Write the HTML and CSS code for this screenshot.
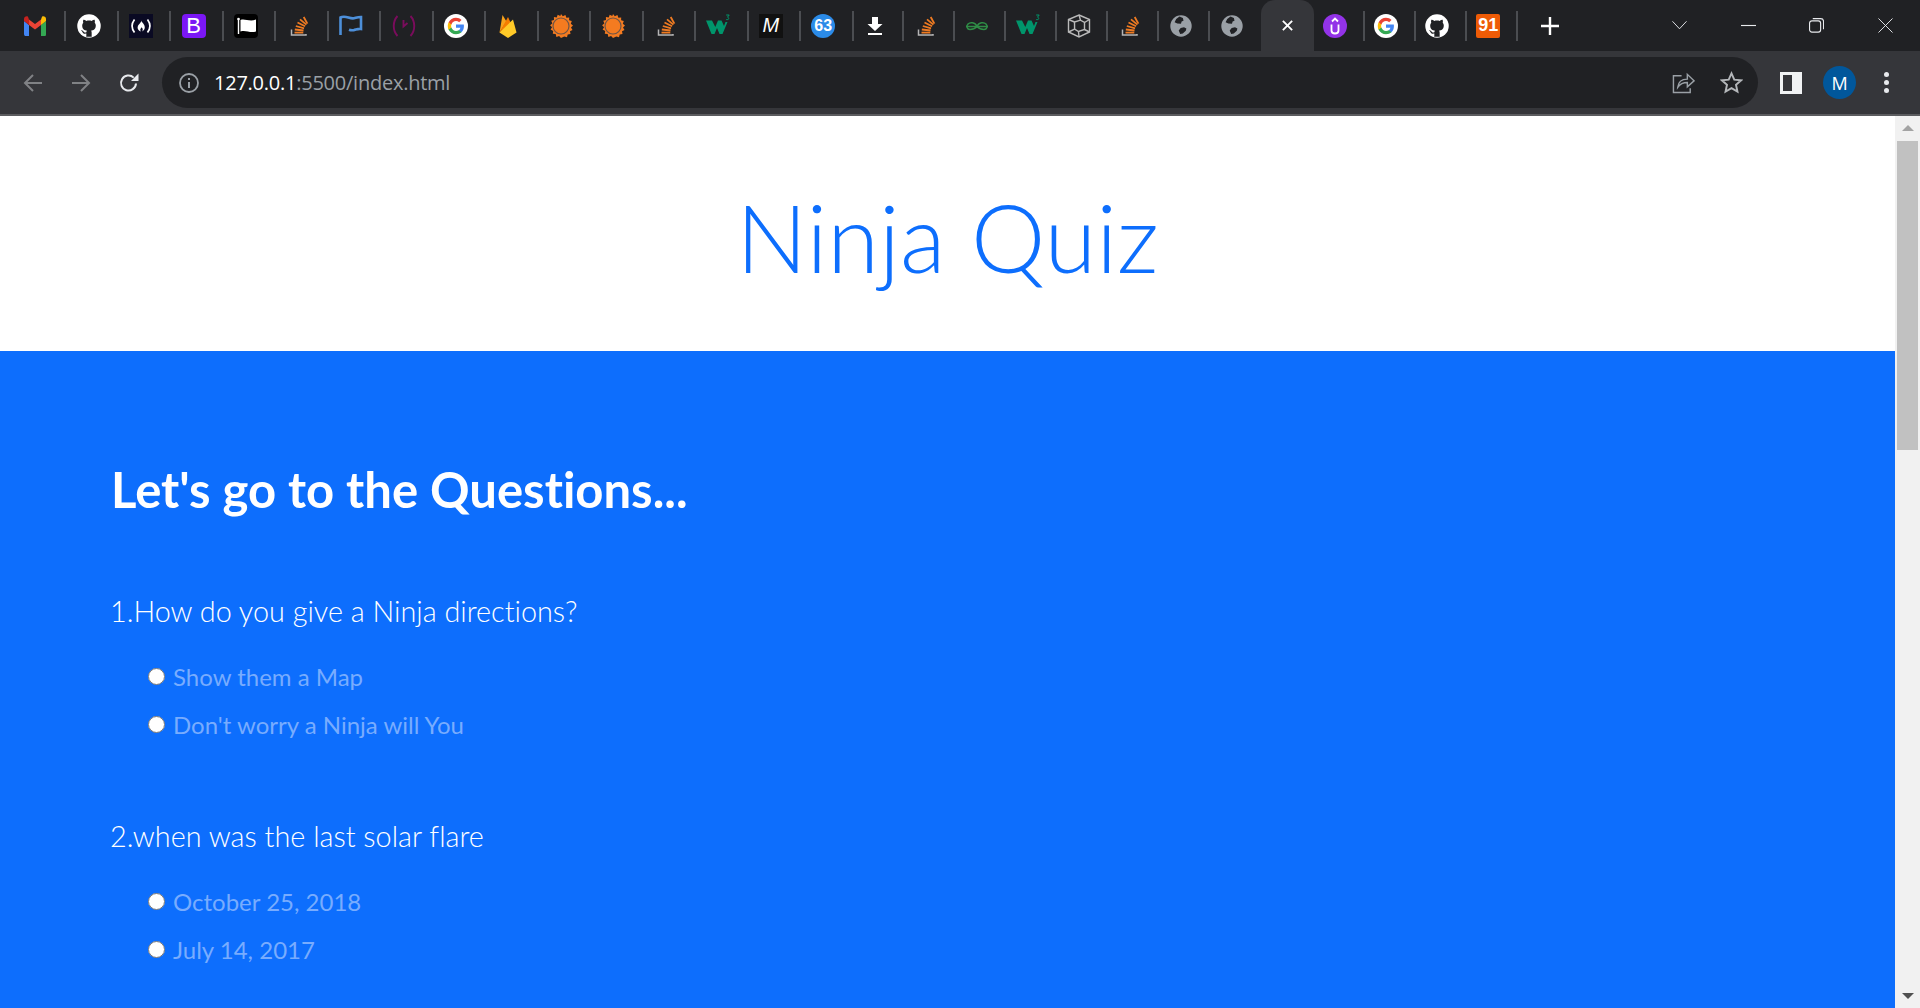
FILE: index.html
```html
<!DOCTYPE html>
<html lang="en">
<head>
    <meta charset="UTF-8">
    <title>Ninja Quiz</title>
    <link rel="stylesheet" href="styles.css">
</head>
<body>
    <svg class="defs" width="0" height="0">
        <symbol id="ic-github" viewBox="-1 -1 18 18">
            <circle cx="8" cy="8" r="8.8" fill="#fff"/>
            <path fill="#202124" d="M5.9 15.9c.1-.3.1-.5.1-.7 0-.2 0-.8 0-1.5-2 .4-2.5-.5-2.7-.9-.1-.2-.5-.9-.8-1.1-.3-.2-.7-.5 0-.5.6 0 1.1.6 1.2.8.7 1.2 1.9.9 2.3.7.1-.5.3-.9.5-1.1-1.8-.2-3.6-.9-3.6-3.9 0-.9.3-1.6.8-2.2-.1-.2-.4-1 .1-2.1 0 0 .7-.2 2.2.8.6-.2 1.3-.3 2-.3s1.4.1 2 .3c1.5-1 2.2-.8 2.2-.8.4 1.1.2 1.9.1 2.1.5.6.8 1.3.8 2.2 0 3-1.9 3.7-3.6 3.9.3.3.5.7.5 1.5v2.2c0 .2 0 .4.1.7H5.9z"/>
        </symbol>
        <symbol id="ic-google" viewBox="0 0 24 24">
            <circle cx="12" cy="12" r="12" fill="#fff"/>
            <g transform="translate(3 3) scale(.75)">
                <path fill="#4285f4" d="M22.56 12.25c0-.78-.07-1.53-.2-2.25H12v4.26h5.92c-.26 1.37-1.04 2.53-2.21 3.31v2.77h3.57c2.08-1.92 3.28-4.74 3.28-8.09z"/>
                <path fill="#34a853" d="M12 23c2.97 0 5.46-.98 7.28-2.66l-3.57-2.77c-.98.66-2.23 1.06-3.71 1.06-2.86 0-5.29-1.93-6.16-4.53H2.18v2.84C3.99 20.53 7.7 23 12 23z"/>
                <path fill="#fbbc05" d="M5.84 14.09c-.22-.66-.35-1.36-.35-2.09s.13-1.43.35-2.09V7.07H2.18C1.43 8.55 1 10.22 1 12s.43 3.45 1.18 4.93l3.66-2.84z"/>
                <path fill="#ea4335" d="M12 5.38c1.62 0 3.06.56 4.21 1.64l3.15-3.15C17.45 2.09 14.97 1 12 1 7.7 1 3.99 3.47 2.18 7.07l3.66 2.84c.87-2.6 3.3-4.53 6.16-4.53z"/>
            </g>
        </symbol>
        <symbol id="ic-so" viewBox="0 0 24 24">
            <path d="M4.500 15.500v5.500h14.500v-1" fill="none" stroke="#b5b5b5" stroke-width="1.500"/>
            <g stroke="#ef7b22" stroke-width="1.800" fill="none">
                <path d="M7.500 18.600h8.800"/>
                <path d="M7.800 15.500l8.700 1"/>
                <path d="M8.800 12l8.300 2.300"/>
                <path d="M10.500 8.500l7.600 3.800"/>
                <path d="M13 5.400l6.400 5.200"/>
                <path d="M16.700 3l3.700 6.600"/>
            </g>
        </symbol>
        <symbol id="ic-sun" viewBox="0 0 24 24">
            <path fill="#f47b20" d="M12 0l1.800 2.200 2.600-1.200 1 2.700 2.800-.3-.1 2.900 2.700.8-1 2.600 2.200 1.800-2 2 1.500 2.400-2.500 1.400.5 2.800-2.800.4-.7 2.800-2.700-.8L12 24l-1.900-2.100-2.700 1-.7-2.800-2.900-.3.4-2.800-2.600-1.400 1.500-2.400-2-2 2.200-1.800-1-2.600 2.700-.9-.1-2.800 2.800.3 1-2.700 2.600 1.200z"/>
            <circle cx="12" cy="12" r="8" fill="#f47b20" stroke="#6e5547" stroke-width="1.200"/>
        </symbol>
        <symbol id="ic-w3" viewBox="0 0 24 24">
            <path fill="#00956b" d="M0 6.500h6l3.300 6.500L12 6.500h3.500l2.500 5.500 1.500-4h2l-5 12h-3L11 14l-2.500 6h-3z"/>
            <path fill="none" stroke="#00956b" stroke-width="1" d="M20.200 1h3l-1.700 2.200c1.500 0 1.900 2.500-.3 2.500-.5 0-1-.2-1.200-.4"/>
        </symbol>
        <symbol id="ic-globe" viewBox="0 0 24 24">
            <circle cx="12" cy="12" r="10.700" fill="#9aa0a6"/>
            <path fill="#202124" d="M10.500 2.500L7.200 5 5.600 8.200l2.700 1.300 3.700.3.600-2.300 1.900-.8-.6-2.700zM15 13.300l-3.300.7-2 2.600 1.500 3.300 2.600-.5 3-2.700.6-2.200z"/>
        </symbol>
        <symbol id="ic-flag" viewBox="0 0 24 24">
            <path fill="none" stroke="#4d8fd9" stroke-width="2.600" d="M1.500 21V3.500c5-2.800 9 1.800 13.500.8 2.200-.5 4-1.400 7-1.300v12c-3-.5-5 .8-7.500 1.200-1.500.2-3 .1-4.500-.5"/>
        </symbol>
    </svg>

    <div class="tabstrip">
        <div class="tab first">
            <svg class="fav" viewBox="0 0 24 24">
                <path fill="#4285f4" d="M2 22h4V11l-5-4v13c0 1.100.900 2 1 2z"/>
                <path fill="#34a853" d="M18 22h4c1 0 1-.900 1-2V7l-5 4z"/>
                <path fill="#ea4335" d="M6 11V5.500l6 4.500 6-4.500V11l-6 4.500z"/>
                <path fill="#fbbc05" d="M18 5.500V11l5-4V5c0-2-2.400-3.400-4-2.200z"/>
                <path fill="#c5221f" d="M1 7l5 4V5.500L5 2.800C3.400 1.600 1 3 1 5z"/>
            </svg>
        </div>
        <div class="tab"><svg class="fav"><use href="#ic-github"/></svg></div>
        <div class="tab">
            <svg class="fav" viewBox="0 0 24 24">
                <rect width="24" height="24" fill="#0a0a23"/>
                <path d="M5.500 5.500C2.500 9.500 2.500 14.500 5.500 18.500M18.500 5.500c3 4 3 9 0 13" fill="none" stroke="#fff" stroke-width="1.700"/>
                <path fill="#fff" d="M12 6c.5 2.500 3.800 4 3.800 7.300 0 2.200-1.300 3.500-2.800 4.200 1.100-1.400 1-3-.5-4.300-.4 1.300-1.500 1.500-1.100 3 .1.500.2 1 .4 1.300-1.700-.5-3.200-2.100-3.200-4.100 0-2.500 2.300-3.600 3.400-5.700.3-.5.200-1.100 0-1.700z"/>
            </svg>
        </div>
        <div class="tab"><span class="fav letter boot">B</span></div>
        <div class="tab">
            <svg class="fav" viewBox="0 0 24 24">
                <rect width="24" height="24" rx="4" fill="#000"/>
                <circle cx="4.500" cy="5" r="1.300" fill="#fff"/>
                <path fill="#fff" d="M3.800 5h1.400v15H3.800zM6.500 6c4-1.800 9 2 15.500-.5v12c-6 2-10-1.800-15.500 0z"/>
            </svg>
        </div>
        <div class="tab"><svg class="fav"><use href="#ic-so"/></svg></div>
        <div class="tab"><svg class="fav"><use href="#ic-flag"/></svg></div>
        <div class="tab">
            <svg class="fav" viewBox="0 0 24 24" fill="none" stroke="#7a0c5c" stroke-width="1.900">
                <path d="M5.500 2C.500 7.500.500 16.500 5.500 22M18.500 2c5 5.500 5 14.500 0 20"/>
                <path d="M11.500 6v6.500l4-3.500"/>
            </svg>
        </div>
        <div class="tab"><svg class="fav"><use href="#ic-google"/></svg></div>
        <div class="tab">
            <svg class="fav" viewBox="0 0 24 24">
                <path fill="#f6a21c" d="M3.500 18.500L6.500 1l4 6.500z"/>
                <path fill="#f57c00" d="M3.500 18.500L12 3l3 6.500z"/>
                <path fill="#ffca28" d="M3.500 18.500L17 5.500l3.500 13L12 24z"/>
            </svg>
        </div>
        <div class="tab"><svg class="fav"><use href="#ic-sun"/></svg></div>
        <div class="tab"><svg class="fav"><use href="#ic-sun"/></svg></div>
        <div class="tab"><svg class="fav"><use href="#ic-so"/></svg></div>
        <div class="tab"><svg class="fav"><use href="#ic-w3"/></svg></div>
        <div class="tab"><span class="fav letter mdn">M</span></div>
        <div class="tab"><span class="fav letter count">63</span></div>
        <div class="tab narrow">
            <svg class="fav" viewBox="0 0 24 24" fill="#fff">
                <path d="M9 3h6v7h4.500L12 17 4.500 10H9z"/>
                <rect x="5" y="19" width="14" height="2"/>
            </svg>
        </div>
        <div class="tab narrow"><svg class="fav"><use href="#ic-so"/></svg></div>
        <div class="tab narrow">
            <svg class="fav" viewBox="0 0 24 24" fill="none" stroke="#2f8d46" stroke-width="1.500">
                <path d="M12 12.500h11M12 12.500H1"/>
                <path d="M12 12.500c-2-4.500-7-4.500-9-2.500-2 2-1 5.500 2 5.500 3.500 0 5.500-1.500 7-3 1.500 1.500 3.500 3 7 3 3 0 4-3.500 2-5.500-2-2-7-2-9 2.500z"/>
            </svg>
        </div>
        <div class="tab narrow"><svg class="fav"><use href="#ic-w3"/></svg></div>
        <div class="tab narrow">
            <svg class="fav" viewBox="0 0 24 24" fill="none" stroke="#b9b9b9" stroke-width="1.400">
                <path d="M12 1l10.500 4.500V18L12 23 1.500 18V5.500z"/>
                <path d="M7.500 8l6-1.800 4 2.300v7l-6 2-3.900-2.400z"/>
                <path d="M1.500 5.500L7.500 8M12 1l1.500 5.200M22.500 5.500l-5 3M22.500 18l-5-2.500M12 23l-.5-5.500M1.500 18l6.100-2.900"/>
            </svg>
        </div>
        <div class="tab narrow"><svg class="fav"><use href="#ic-so"/></svg></div>
        <div class="tab narrow"><svg class="fav"><use href="#ic-globe"/></svg></div>
        <div class="tab narrow before-active"><svg class="fav"><use href="#ic-globe"/></svg></div>
        <div class="tab active">
            <svg class="tab-close" viewBox="0 0 14 14" fill="none" stroke="#fff" stroke-width="2">
                <path d="M2 2l10 10M12 2L2 12"/>
            </svg>
        </div>
        <div class="tab narrow">
            <svg class="fav" viewBox="0 0 24 24">
                <circle cx="12" cy="12" r="12" fill="#9333e8"/>
                <path d="M8.500 10.500v6c0 4 7 4 7 0v-6M9 7.500l3-3 3 3" fill="none" stroke="#fff" stroke-width="1.800"/>
            </svg>
        </div>
        <div class="tab narrow"><svg class="fav"><use href="#ic-google"/></svg></div>
        <div class="tab narrow"><svg class="fav"><use href="#ic-github"/></svg></div>
        <div class="tab narrow"><span class="fav letter ninety">91</span></div>
        <svg class="new-tab" viewBox="0 0 18 18" fill="none" stroke="#fff" stroke-width="2.400">
            <path d="M9 0v18M0 9h18"/>
        </svg>
        <div class="window-btns">
            <svg class="win-ic" viewBox="0 0 16 10" fill="none" stroke="#e8eaed" stroke-width="1"><path d="M.5 .5L8 8.500 15.500 .5"/></svg>
            <svg class="win-ic" viewBox="0 0 16 10" fill="none" stroke="#e8eaed" stroke-width="1.200"><path d="M0 5h16"/></svg>
            <svg class="win-ic" viewBox="0 0 16 16" fill="none" stroke="#e8eaed" stroke-width="1.200"><rect x=".6" y="3" width="11.800" height="12" rx="2.500"/><path d="M4 .7h8.500c1.700 0 3 1.300 3 3V12"/></svg>
            <svg class="win-ic" viewBox="0 0 16 16" fill="none" stroke="#e8eaed" stroke-width="1"><path d="M.5 .5l15 15M15.500 .5l-15 15"/></svg>
        </div>
    </div>

    <div class="toolbar">
        <svg class="tool-ic nav-back" viewBox="0 0 20 20" fill="none" stroke="#808285" stroke-width="2"><path d="M19 10H2M10 2l-8 8 8 8"/></svg>
        <svg class="tool-ic nav-fwd" viewBox="0 0 20 20" fill="none" stroke="#808285" stroke-width="2"><path d="M1 10h17M10 2l8 8-8 8"/></svg>
        <svg class="tool-ic nav-reload" viewBox="0 0 20 20" fill="none" stroke="#e8eaed" stroke-width="2"><path d="M17 10.500a7.500 7.500 0 1 1-2.300-5.900"/><path fill="#e8eaed" stroke="none" d="M19.500 .5v7.500H12z"/></svg>
        <div class="omnibox">
            <svg class="info-ic" viewBox="0 0 20 20">
                <circle cx="10" cy="10" r="9" fill="none" stroke="#9aa0a6" stroke-width="1.800"/>
                <path fill="#9aa0a6" d="M9 9h2v6H9zM9 5h2v2H9z"/>
            </svg>
            <span class="url"><span class="host">127.0.0.1</span>:5500/index.html</span>
            <svg class="omni-ic share" viewBox="0 0 24 24" fill="none" stroke="#9aa0a6" stroke-width="1.500">
                <path d="M10 5H1.500v17.500H19V18"/>
                <path d="M6 17c.500-5 4-8.500 10-8.500V3.500l7 6.700-7 6.300v-4.500c-4 0-7.500 1.500-10 5z"/>
            </svg>
            <svg class="omni-ic star" viewBox="0 0 24 24" fill="none" stroke="#b4b7ba" stroke-width="2">
                <path d="M12 2.500l2.900 6.500 7.100.7-5.300 4.700 1.500 7L12 17.800 5.800 21.400l1.500-7L2 9.700l7.100-.7z"/>
            </svg>
        </div>
        <div class="side-panel"></div>
        <div class="avatar">M</div>
        <div class="kebab"><i></i><i></i><i></i></div>
    </div>

    <div class="viewport">
        <main class="page">
            <header class="title-band">
                <h1>Ninja Quiz</h1>
            </header>
            <section class="quiz">
                <h2>Let's go to the Questions...</h2>
                <form>
                    <div class="question">
                        <p class="q-text">1.How do you give a Ninja directions?</p>
                        <label class="option"><input type="radio" name="q1"> Show them a Map</label>
                        <label class="option"><input type="radio" name="q1"> Don't worry a Ninja will You</label>
                    </div>
                    <div class="question">
                        <p class="q-text">2.when was the last solar flare</p>
                        <label class="option"><input type="radio" name="q2"> October 25, 2018</label>
                        <label class="option"><input type="radio" name="q2"> July 14, 2017</label>
                    </div>
                </form>
            </section>
        </main>
        <div class="scrollbar">
            <div class="arrow up"></div>
            <div class="thumb"></div>
            <div class="arrow down"></div>
        </div>
    </div>
</body>
</html>
```

FILE: styles.css
```css
* {
    box-sizing: border-box;
}
html, body {
    height: 100%;
    margin: 0;
}
body {
    display: flex;
    flex-direction: column;
    overflow: hidden;
    font-family: Lato, Arial, sans-serif;
    font-variant-ligatures: none;
}
.defs {
    position: absolute;
}

/* tab strip */
.tabstrip {
    display: flex;
    align-items: center;
    height: 51px;
    padding-left: 14px;
    background-color: #202124;
    flex-shrink: 0;
}
.tab {
    display: flex;
    align-items: center;
    justify-content: center;
    width: 52.47px;
    height: 30px;
    padding-right: 6px;
    border-right: 2px solid #4b4d51;
    flex-shrink: 0;
}
.tab.narrow {
    width: 50.95px;
}
.tab.first {
    padding-right: 8px;
}
.tab.before-active {
    border-right-color: transparent;
}
.tab.active {
    width: 53px;
    height: 51px;
    padding-right: 0;
    border: none;
    border-radius: 14px 14px 0 0;
    background-color: #35363a;
}
.fav {
    display: block;
    width: 24px;
    height: 24px;
}
.letter {
    display: flex;
    align-items: center;
    justify-content: center;
    font-family: "Liberation Sans", Arial, sans-serif;
    color: #fff;
}
.boot {
    background-color: #7b17f5;
    border-radius: 4px;
    font-size: 22px;
}
.mdn {
    background-color: #111;
    font-style: italic;
    font-size: 20px;
}
.count {
    background-color: #2b8be8;
    border-radius: 50%;
    font-size: 16px;
    font-weight: bold;
}
.ninety {
    background-color: #ee5b06;
    border-radius: 2px;
    font-size: 18px;
    font-weight: bold;
}
.tab-close {
    width: 13px;
    height: 13px;
}
.new-tab {
    width: 18px;
    height: 18px;
    margin-left: 23px;
}
.window-btns {
    display: flex;
    align-items: center;
    gap: 53.7px;
    margin-left: auto;
    margin-right: 27px;
    height: 43px;
}
.win-ic {
    width: 15px;
    height: 15px;
}

/* toolbar */
.toolbar {
    display: flex;
    align-items: center;
    height: 65px;
    padding-left: 23px;
    background-color: #35363a;
    border-bottom: 2px solid #5b5c5f;
    flex-shrink: 0;
}
.tool-ic {
    width: 20px;
    height: 20px;
}
.nav-fwd {
    margin-left: 28px;
}
.nav-reload {
    margin-left: 28px;
}
.omnibox {
    display: flex;
    align-items: center;
    width: 1596px;
    height: 51px;
    margin-left: 23px;
    padding: 0 12px 0 17px;
    background-color: #202124;
    border-radius: 26px;
    flex-shrink: 0;
}
.info-ic {
    width: 20px;
    height: 20px;
}
.url {
    margin-left: 15px;
    font-family: "Open Sans", Arial, sans-serif;
    font-size: 20px;
    letter-spacing: -0.24px;
    color: #9aa0a6;
}
.host {
    color: #fff;
}
.omni-ic {
    width: 23px;
    height: 23px;
}
.share {
    margin-left: auto;
}
.star {
    margin-left: 25px;
    margin-right: 3px;
}
.side-panel {
    width: 22px;
    height: 22px;
    margin-left: 22px;
    background-color: #35363a;
    border: 3px solid #f1f3f4;
    border-right-width: 10px;
}
.avatar {
    display: flex;
    align-items: center;
    justify-content: center;
    width: 33px;
    height: 33px;
    margin-left: 21px;
    border-radius: 50%;
    background-color: #01579b;
    color: #fff;
    font-family: "Open Sans", Arial, sans-serif;
    font-size: 18px;
}
.kebab {
    display: flex;
    flex-direction: column;
    gap: 3px;
    margin-left: 28px;
}
.kebab i {
    display: block;
    width: 5px;
    height: 5px;
    border-radius: 50%;
    background-color: #e8eaed;
}

/* page */
.viewport {
    display: flex;
    flex: 1;
    min-height: 0;
}
.page {
    flex: 1;
    min-width: 0;
    overflow: hidden;
    background-color: #fff;
}
.title-band {
    height: 235px;
    padding-top: 7px;
    display: flex;
    align-items: center;
    justify-content: center;
}
.title-band h1 {
    margin: 0;
    font-size: 94px;
    font-weight: 300;
    color: #0d6efd;
    line-height: 1.2;
}
.quiz {
    height: 100%;
    padding: 110px 110px 0;
    background-color: #0d6efd;
    color: #fff;
}
.quiz h2 {
    margin: 0 0 70px;
    padding-left: 1px;
    font-size: 49px;
    font-weight: 700;
    line-height: 1.18;
}
.question {
    margin-bottom: 65px;
}
.q-text {
    margin: 0 0 19px;
    font-size: 28.8px;
    font-weight: 300;
    line-height: 45px;
}
.option {
    display: flex;
    align-items: center;
    gap: 8px;
    height: 48px;
    padding-left: 38px;
    font-size: 24px;
    color: #78acfe;
}
.option input {
    width: 17px;
    height: 17px;
    margin: 0;
}

/* scrollbar */
.scrollbar {
    display: flex;
    flex-direction: column;
    align-items: center;
    width: 25px;
    padding: 0 2px;
    background-color: #f1f1f1;
    flex-shrink: 0;
}
.thumb {
    width: 21px;
    height: 309px;
    margin-top: 10px;
    background-color: #c1c1c1;
}
.arrow {
    width: 0;
    height: 0;
    border-left: 6px solid transparent;
    border-right: 6px solid transparent;
}
.arrow.up {
    margin-top: 9px;
    border-bottom: 6px solid #a3a3a3;
}
.arrow.down {
    margin-top: auto;
    margin-bottom: 9px;
    border-top: 6px solid #505050;
}
```
